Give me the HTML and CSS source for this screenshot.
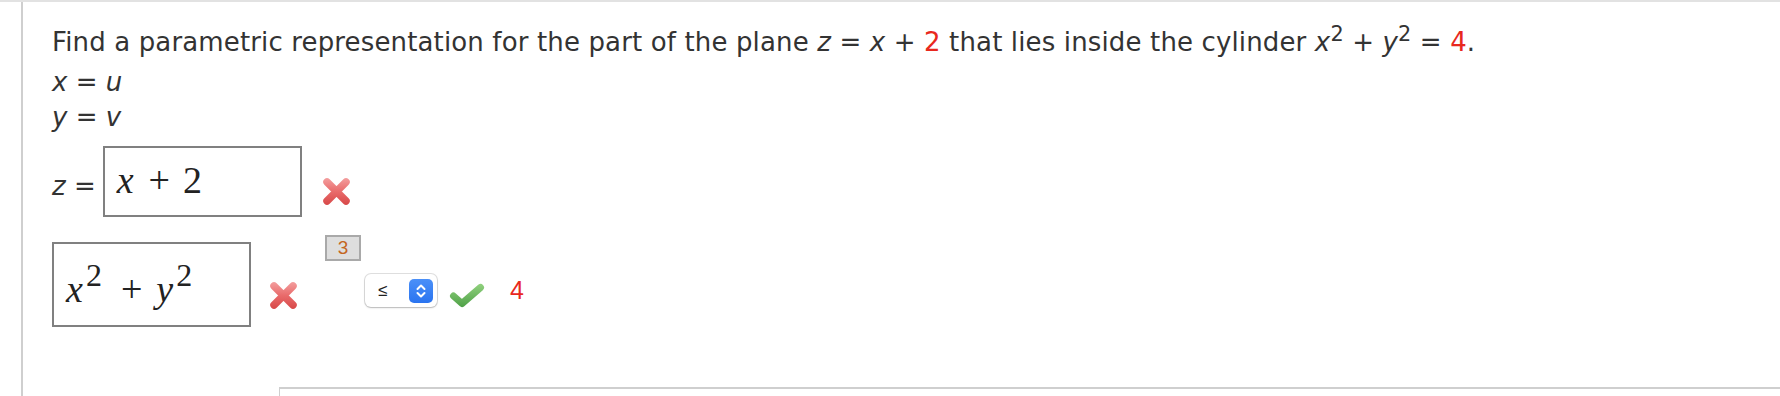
FILE: index.html
```html
<!DOCTYPE html>
<html>
<head>
<meta charset="utf-8">
<link rel="stylesheet" href="styles.css">
</head>
<body>
<div class="top-rule"></div>
<div class="panel">
  <div class="question">
    <p class="prompt">Find a parametric representation for the part of the plane <i>z</i> = <i>x</i> + <span class="red">2</span> that lies inside the cylinder <i>x</i><sup>2</sup> + <i>y</i><sup>2</sup> = <span class="red">4</span>.</p>
    <p class="eq eq-x"><i>x</i> = <i>u</i></p>
    <p class="eq eq-y"><i>y</i> = <i>v</i></p>

    <div class="row row-z">
      <span class="label"><i>z</i> =</span>
      <div class="mbox mbox-z"><span class="mi">x</span><span class="mo">+</span><span class="mn">2</span></div>
      <svg class="wrong wrong-z" width="29" height="29" viewBox="0 0 29 29">
        <defs><linearGradient id="rx1" x1="0" y1="0" x2="0" y2="29" gradientUnits="userSpaceOnUse"><stop offset="0" stop-color="#f4a2a2"/><stop offset="0.5" stop-color="#e96b6b"/><stop offset="1" stop-color="#d64646"/></linearGradient></defs>
        <path d="M5 5 L24 24 M24 5 L5 24" stroke="url(#rx1)" stroke-width="7.5" stroke-linecap="round" fill="none"/>
      </svg>
    </div>

    <div class="row row-ineq">
      <div class="mbox mbox-ineq"><span class="mi">x</span><sup class="msup">2</sup><span class="mo">+</span><span class="mi">y</span><sup class="msup">2</sup></div>
      <svg class="wrong wrong-ineq" width="29" height="29" viewBox="0 0 29 29">
        <defs><linearGradient id="rx2" x1="0" y1="0" x2="0" y2="29" gradientUnits="userSpaceOnUse"><stop offset="0" stop-color="#f4a2a2"/><stop offset="0.5" stop-color="#e96b6b"/><stop offset="1" stop-color="#d64646"/></linearGradient></defs>
        <path d="M5 5 L24 24 M24 5 L5 24" stroke="url(#rx2)" stroke-width="7.5" stroke-linecap="round" fill="none"/>
      </svg>
      <div class="select-col">
        <span class="badge">3</span>
        <div class="select"><span class="sel-val">≤</span><span class="sel-btn"><svg width="24" height="24" viewBox="0 0 24 24"><path d="M8.5 10 L12 6.5 L15.5 10 M8.5 14 L12 17.5 L15.5 14" stroke="#fff" stroke-width="2" fill="none" stroke-linecap="round" stroke-linejoin="round"/></svg></span></div>
      </div>
      <svg class="right" width="36" height="25" viewBox="0 0 36 25">
        <defs><linearGradient id="gc" x1="0" y1="0" x2="0" y2="25" gradientUnits="userSpaceOnUse"><stop offset="0" stop-color="#94d381"/><stop offset="1" stop-color="#4c9f45"/></linearGradient></defs>
        <path d="M4.5 13 L13 20.5 L31.5 4.5" stroke="url(#gc)" stroke-width="7" stroke-linecap="round" stroke-linejoin="round" fill="none"/>
      </svg>
      <span class="rhs red">4</span>
    </div>
  </div>
  <div class="footer-rule"></div>
</div>
</body>
</html>
```
FILE: styles.css
```css
html, body {
  margin: 0;
  padding: 0;
  background: #fff;
}
body {
  width: 1780px;
  height: 396px;
  overflow: hidden;
  font-family: "DejaVu Sans", Verdana, sans-serif;
  color: #333;
}
.top-rule {
  height: 2px;
  background: #e2e2e2;
}
.panel {
  margin-left: 21px;
  border-left: 2px solid #cfcfcf;
  height: 394px;
  display: flex;
  flex-direction: column;
}
.question {
  padding: 25px 0 0 29px;
}
.prompt, .eq {
  margin: 0;
  font-size: 26px;
  line-height: 30px;
  white-space: nowrap;
}
.prompt { letter-spacing: 0.14px; }
.prompt sup {
  font-size: 0.8em;
  line-height: 0;
  vertical-align: 0.5em;
}
.red { color: #e8281e; }
.eq-x { margin-top: 10px; }
.eq-y { margin-top: 5px; }

.row {
  display: flex;
  align-items: flex-start;
}
.row-z { margin-top: 14px; }
.row-ineq { margin-top: 18px; }

.label {
  font-size: 26px;
  line-height: 30px;
  margin-top: 25px;
  margin-right: 7px;
  white-space: nowrap;
}
.mbox {
  box-sizing: border-box;
  border: 2px solid #808080;
  display: flex;
  align-items: baseline;
  padding-left: 12px;
  font-family: "Liberation Serif", "DejaVu Serif", serif;
  font-size: 38px;
  line-height: 38px;
  color: #222;
}
.mbox-z {
  width: 199px;
  height: 71px;
  padding-top: 13px;
}
.mbox-ineq {
  width: 199px;
  height: 85px;
  padding-top: 26px;
  margin-top: 7px;
}
.mi { font-style: italic; margin-right: 2px; }
.mo { margin: 0 13px; }
.mbox-ineq .mo { margin: 0 14px 0 13px; }
.msup {
  font-size: 32px;
  line-height: 0;
  position: relative;
  top: -16px;
  vertical-align: baseline;
  margin-left: 1px;
  margin-right: 6px;
}
.wrong { display: block; flex: none; }
.wrong-z { margin-left: 20px; margin-top: 31px; }
.wrong-ineq { margin-left: 18px; margin-top: 46px; }

.select-col {
  margin-left: 27px;
  display: flex;
  flex-direction: column;
  align-items: flex-start;
}
.badge {
  box-sizing: border-box;
  width: 36px;
  height: 26px;
  background: #dedede;
  border: 2px solid #a9a9a9;
  color: #c4661f;
  font-family: "Liberation Sans", Arial, sans-serif;
  font-size: 19px;
  line-height: 22px;
  text-align: center;
}
.select {
  box-sizing: border-box;
  margin-top: 13px;
  margin-left: 40px;
  width: 72px;
  height: 33px;
  background: #fff;
  border-radius: 6px;
  box-shadow: 0 0 0 1px rgba(0,0,0,0.12), 0 1px 2px rgba(0,0,0,0.18);
  display: flex;
  align-items: center;
  padding: 0 4px 0 13px;
}
.sel-val {
  flex: 1;
  font-family: "Liberation Sans", Arial, sans-serif;
  font-size: 17px;
  color: #222;
}
.sel-btn {
  width: 24px;
  height: 24px;
  border-radius: 5px;
  background: linear-gradient(#4b90f8, #2a74f0);
  display: flex;
}
.right { display: block; flex: none; margin-left: 12px; margin-top: 48px; }
.rhs {
  margin-left: 25px;
  margin-top: 43px;
  font-family: "Liberation Sans", Arial, sans-serif;
  font-size: 25px;
  line-height: 24px;
}
.footer-rule {
  margin-top: auto;
  margin-left: 256px;
  height: 7px;
  border-top: 2px solid #cfcfcf;
  border-left: 1px solid #cfcfcf;
}
```
